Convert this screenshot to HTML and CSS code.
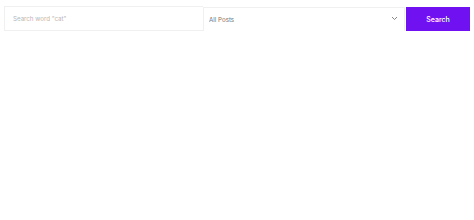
FILE: index.html
```html
<!DOCTYPE html>
<html lang="en">

<head>
    <meta charset="UTF-8">
    <meta name="viewport" content="width=device-width, initial-scale=1.0">
    <title>Search</title>
    <link rel="stylesheet" href="styles.css">
</head>

<body>
    <form class="search-bar" action="#">
        <input type="text" class="search-input" placeholder="Search word &quot;cat&quot;">
        <div class="select-wrap">
            <select class="search-select">
                <option>All Posts</option>
            </select>
            <svg class="chevron" width="7" height="5" viewBox="0 0 7 5">
                <path d="M1 1l2.5 2.5L6 1" fill="none" stroke="#888" stroke-width="1" />
            </svg>
        </div>
        <button type="button" class="search-btn">Search</button>
    </form>
</body>

</html>
```

FILE: styles.css
```css
* {
    margin: 0;
    padding: 0;
    box-sizing: border-box;
}

body {
    background: #fff;
    font-family: Inter, "Liberation Sans", sans-serif;
}

.search-bar {
    display: flex;
    margin: 6px 4px 0 4px;
    height: 25px;
    width: 466px;
}

.search-input {
    width: 199px;
    height: 25px;
    border: 1px solid #f0f0f0;
    border-right: none;
    padding: 0 8px;
    font-family: inherit;
    font-size: 6.2px;
    color: #333;
    outline: none;
}

.search-input::placeholder {
    color: #b8b8b8;
}

.select-wrap {
    position: relative;
    width: 202px;
    height: 25px;
}

.search-select {
    appearance: none;
    width: 100%;
    height: 25px;
    border: 1px solid #f0f0f0;
    background: #fff;
    padding: 0 5px;
    font-family: inherit;
    font-size: 6.2px;
    color: #777;
    outline: none;
}

.chevron {
    position: absolute;
    right: 7px;
    top: 10px;
}

.search-btn {
    width: 64px;
    height: 24px;
    margin-top: 1px;
    margin-left: 1px;
    border: none;
    background: #7011f1;
    color: #fff;
    font-family: inherit;
    font-size: 7px;
    font-weight: 500;
}
```
